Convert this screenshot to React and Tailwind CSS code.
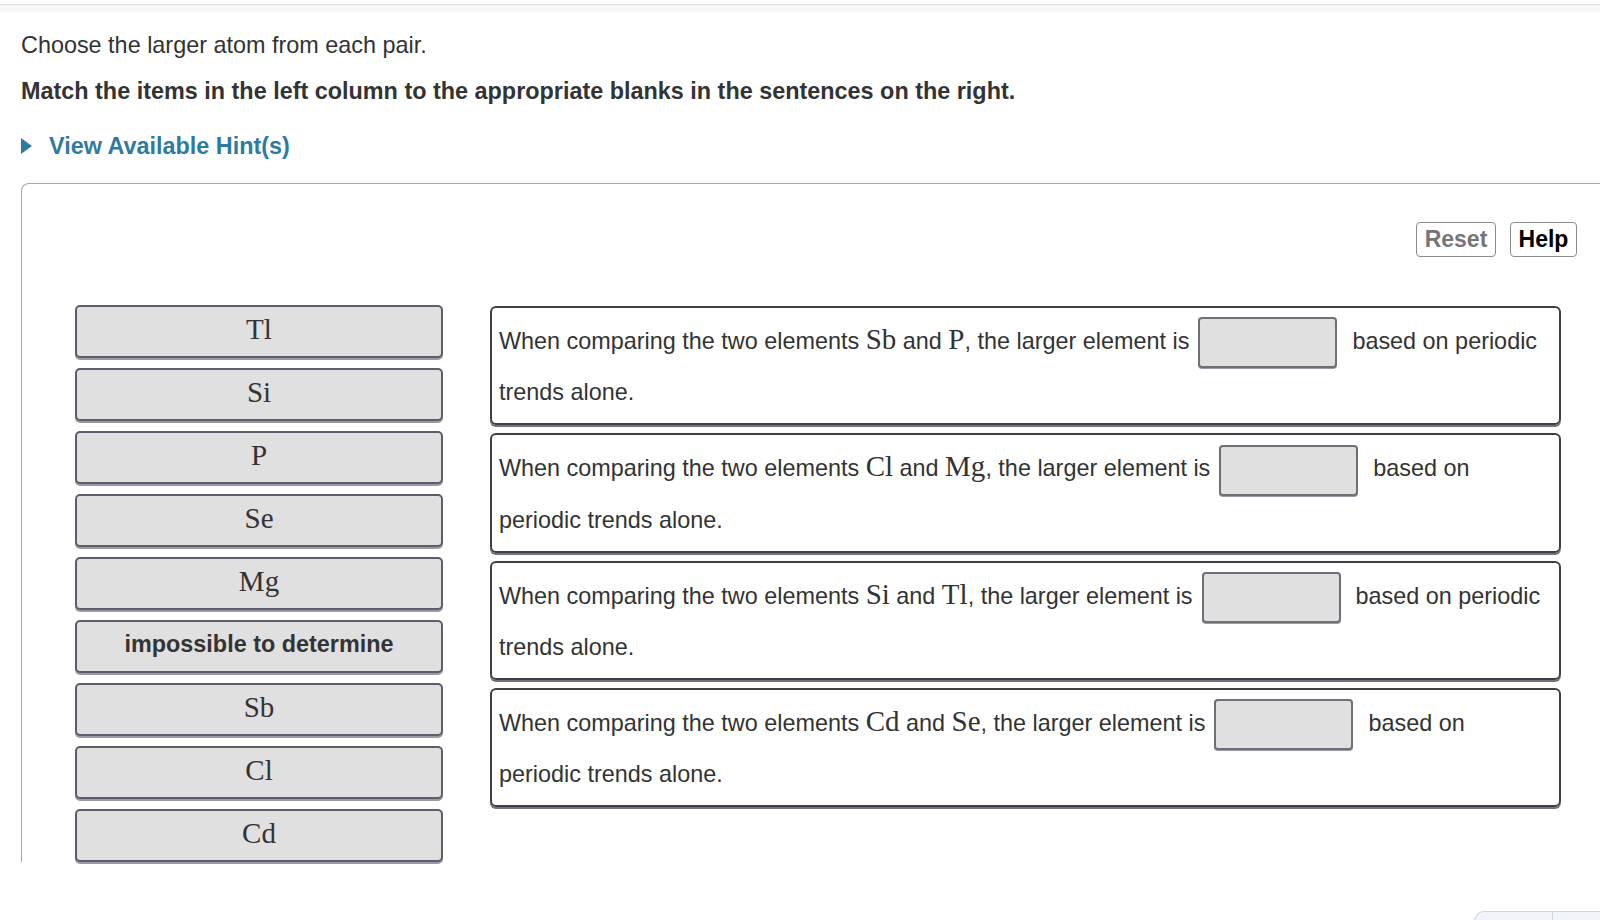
import React from 'react'

const items = ['Tl', 'Si', 'P', 'Se', 'Mg', 'impossible to determine', 'Sb', 'Cl', 'Cd']

const sentences = [
    { a: 'Sb', b: 'P', tail: 'based on periodic', rest: 'trends alone.' },
    { a: 'Cl', b: 'Mg', tail: 'based on', rest: 'periodic trends alone.' },
    { a: 'Si', b: 'Tl', tail: 'based on periodic', rest: 'trends alone.' },
    { a: 'Cd', b: 'Se', tail: 'based on', rest: 'periodic trends alone.' },
]

function Sym({ children }) {
    return <span className="font-['Liberation_Serif',serif] text-[29px]">{children}</span>
}

function Sentence({ s }) {
    return (
        <div className="rounded-[6px] border-2 border-[#3d4045] shadow-[0_2px_0_#6f737a] px-[7px] py-[7px] leading-[48px] text-[#333]">
            <div className="whitespace-nowrap">
                When comparing the two elements <Sym>{s.a}</Sym> and <Sym>{s.b}</Sym>, the larger element is
                <span className="inline-block align-middle ml-[9px] w-[139px] h-[51px] rounded-[4px] border-2 border-[#6e7076] bg-[#e0e0e0] shadow-[0_1px_0_#9a9aa6]"></span>
                <span className="ml-[15px]">{s.tail}</span>
            </div>
            <div>{s.rest}</div>
        </div>
    )
}

export default function App() {
    return (
        <div className="w-full h-[920px] overflow-hidden bg-white font-['Liberation_Sans',Arial,sans-serif] text-[23.4px] text-[#333]">
            <div className="mt-[4px] h-[8px] border-t border-[#dedede] bg-[#f7f7f7]"></div>

            <div className="pl-[21px]">
                <p className="mt-[18px] leading-[30px]">Choose the larger atom from each pair.</p>
                <p className="mt-[16px] leading-[30px] font-bold">Match the items in the left column to the appropriate blanks in the sentences on the right.</p>
                <div className="mt-[25px] flex items-center gap-[17px] leading-[30px] font-bold text-[#2f7ba0]">
                    <svg width="11" height="16" viewBox="0 0 11 16">
                        <path d="M0 0 L11 8 L0 16 Z" fill="#2f7ba0" />
                    </svg>
                    <span>View Available Hint(s)</span>
                </div>
            </div>

            <div className="ml-[21px] mt-[22px] border-t border-l border-[#a9a9a9] rounded-tl-[8px]">
                <div className="flex justify-end gap-[14px] pt-[38px] pr-[23px]">
                    <button className="h-[35px] w-[80px] rounded-[4px] border border-[#8c8c8c] bg-white text-[23px] font-bold text-[#767676] leading-none">Reset</button>
                    <button className="h-[35px] w-[67px] rounded-[4px] border border-[#8c8c8c] bg-white text-[23px] font-bold text-black leading-none">Help</button>
                </div>

                <div className="flex gap-[47px] pt-[48px] pl-[53px] pr-[39px]">
                    <div className="w-[368px] shrink-0 flex flex-col gap-[10px]">
                        {items.map((it) => (
                            <div
                                key={it}
                                className="h-[53px] flex items-center justify-center rounded-[5px] border-2 border-[#5c5f69] bg-[#e0e0e0] shadow-[0_2px_0_#9b99a9] pb-[3px]"
                            >
                                {it.length > 2 ? (
                                    <span className="font-bold">{it}</span>
                                ) : (
                                    <Sym>{it}</Sym>
                                )}
                            </div>
                        ))}
                    </div>
                    <div className="flex-1 flex flex-col gap-[8px] pt-[1px]">
                        {sentences.map((s, i) => (
                            <Sentence key={i} s={s} />
                        ))}
                    </div>
                </div>
            </div>

            <div className="flex justify-end mt-[49px]">
                <div className="w-[126px] h-[40px] flex rounded-tl-[10px] border-t border-l border-[#cfd6de] bg-[#f1f4f8]">
                    <div className="w-[78px] border-r border-[#cfd6de]"></div>
                    <div className="flex-1"></div>
                </div>
            </div>
        </div>
    )
}
